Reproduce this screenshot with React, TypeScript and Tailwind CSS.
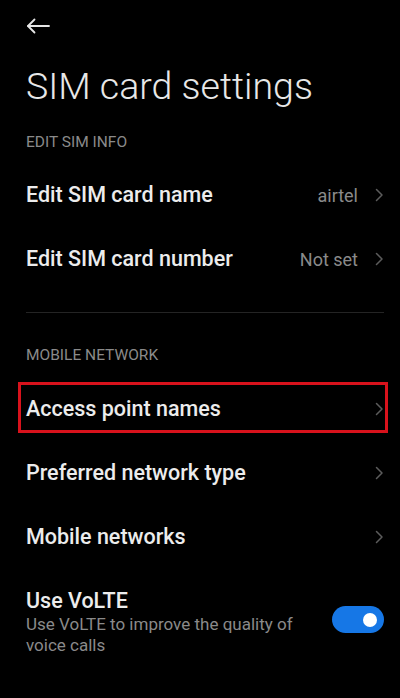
import { useState } from "react"

type Row = {
  title: string
  value?: string
}

const simRows: Row[] = [
  { title: "Edit SIM card name", value: "airtel" },
  { title: "Edit SIM card number", value: "Not set" },
]

const networkRows: Row[] = [
  { title: "Access point names" },
  { title: "Preferred network type" },
  { title: "Mobile networks" },
]

function BackArrow() {
  return (
    <svg width="24" height="16" viewBox="0 0 24 16" fill="none" stroke="#e6e6e6" strokeWidth="1.8" strokeLinecap="round" strokeLinejoin="round">
      <path d="M23 8H2" />
      <path d="M8.5 1.5L2 8l6.5 6.5" />
    </svg>
  )
}

function Chevron() {
  return (
    <svg width="10" height="14" viewBox="0 0 10 14" fill="none" stroke="#5c5c5c" strokeWidth="1.5" strokeLinecap="round" strokeLinejoin="round">
      <path d="M2.5 1.5L8 7l-5.5 5.5" />
    </svg>
  )
}

function SectionLabel({ children }: { children: string }) {
  return <div className="text-[15.5px] leading-[15px] text-[#8a8a8a]">{children}</div>
}

function SettingRow({ row, marked }: { row: Row; marked?: boolean }) {
  return (
    <div className="relative flex h-16 items-center justify-between pt-[4px]">
      <span className="text-[21.5px] font-medium text-[#ececec]">{row.title}</span>
      <div className="flex items-center gap-4">
        {row.value && <span className="text-[18px] text-[#8a8a8a]">{row.value}</span>}
        <Chevron />
      </div>
      {marked && (
        <span className="pointer-events-none absolute -left-[8px] -right-[4px] top-[7px] bottom-[6px] border-[3px] border-[#d8121c]" />
      )}
    </div>
  )
}

export default function App() {
  const [volte, setVolte] = useState(true)

  return (
    <div className="min-h-[698px] bg-black pl-[26px] pr-[16px] font-['Roboto',sans-serif]">
      <div className="pt-[18px]">
        <BackArrow />
      </div>

      <h1 className="mt-[33px] text-[37.5px] font-light leading-[38px] text-[#e8e8e8]">SIM card settings</h1>

      <div className="mt-[30px]">
        <SectionLabel>EDIT SIM INFO</SectionLabel>
      </div>

      <div className="mt-[11px]">
        {simRows.map((row) => (
          <SettingRow key={row.title} row={row} />
        ))}
      </div>

      <div className="mt-[23px] h-px bg-[#242424]" />

      <div className="mt-[35px]">
        <SectionLabel>MOBILE NETWORK</SectionLabel>
      </div>

      <div className="mt-[12px]">
        {networkRows.map((row, i) => (
          <SettingRow key={row.title} row={row} marked={i === 0} />
        ))}
      </div>

      <div className="flex items-start justify-between pt-[21px]">
        <div className="max-w-[295px]">
          <div className="text-[21.5px] font-medium leading-[26px] text-[#ececec]">Use VoLTE</div>
          <div className="text-[17px] leading-[21px] text-[#8a8a8a]">Use VoLTE to improve the quality of voice calls</div>
        </div>
        <button
          onClick={() => setVolte((v) => !v)}
          className={`mt-[18px] flex h-[27px] w-[52px] items-center rounded-full px-[7px] ${volte ? "justify-end bg-[#1677e6]" : "justify-start bg-[#3a3a3a]"}`}
        >
          <span className="h-[14px] w-[14px] rounded-full bg-white" />
        </button>
      </div>
    </div>
  )
}
